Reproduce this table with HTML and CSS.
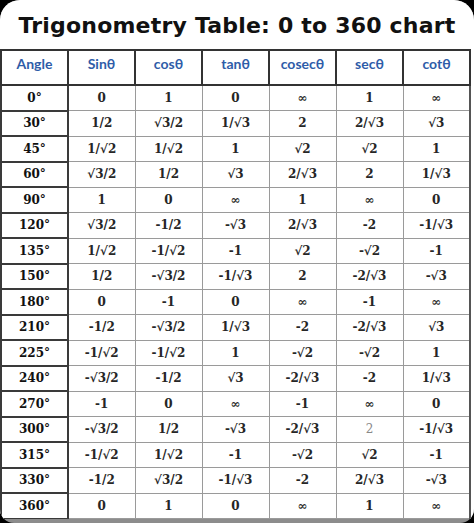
FILE: index.html
```html
<!DOCTYPE html>
<html>
<head>
<meta charset="utf-8">
<link rel="stylesheet" href="styles.css">
</head>
<body>
<div class="frame">
  <div class="card">
    <h1 class="title">Trigonometry Table: 0 to 360 chart</h1>
    <table class="trig">
      <colgroup>
        <col class="c"><col class="c"><col class="c"><col class="c"><col class="c"><col class="c"><col class="c">
      </colgroup>
      <thead>
        <tr><th>Angle</th><th>Sinθ</th><th>cosθ</th><th>tanθ</th><th>cosecθ</th><th>secθ</th><th>cotθ</th></tr>
      </thead>
      <tbody>
        <tr><td class="ang">0°</td><td>0</td><td>1</td><td>0</td><td>∞</td><td>1</td><td>∞</td></tr>
        <tr><td class="ang">30°</td><td>1/2</td><td>√3/2</td><td>1/√3</td><td>2</td><td>2/√3</td><td>√3</td></tr>
        <tr><td class="ang">45°</td><td>1/√2</td><td>1/√2</td><td>1</td><td>√2</td><td>√2</td><td>1</td></tr>
        <tr><td class="ang">60°</td><td>√3/2</td><td>1/2</td><td>√3</td><td>2/√3</td><td>2</td><td>1/√3</td></tr>
        <tr><td class="ang">90°</td><td>1</td><td>0</td><td>∞</td><td>1</td><td>∞</td><td>0</td></tr>
        <tr><td class="ang">120°</td><td>√3/2</td><td>-1/2</td><td>-√3</td><td>2/√3</td><td>-2</td><td>-1/√3</td></tr>
        <tr><td class="ang">135°</td><td>1/√2</td><td>-1/√2</td><td>-1</td><td>√2</td><td>-√2</td><td>-1</td></tr>
        <tr><td class="ang">150°</td><td>1/2</td><td>-√3/2</td><td>-1/√3</td><td>2</td><td>-2/√3</td><td>-√3</td></tr>
        <tr><td class="ang">180°</td><td>0</td><td>-1</td><td>0</td><td>∞</td><td>-1</td><td>∞</td></tr>
        <tr><td class="ang">210°</td><td>-1/2</td><td>-√3/2</td><td>1/√3</td><td>-2</td><td>-2/√3</td><td>√3</td></tr>
        <tr><td class="ang">225°</td><td>-1/√2</td><td>-1/√2</td><td>1</td><td>-√2</td><td>-√2</td><td>1</td></tr>
        <tr><td class="ang">240°</td><td>-√3/2</td><td>-1/2</td><td>√3</td><td>-2/√3</td><td>-2</td><td>1/√3</td></tr>
        <tr><td class="ang">270°</td><td>-1</td><td>0</td><td>∞</td><td>-1</td><td>∞</td><td>0</td></tr>
        <tr><td class="ang">300°</td><td>-√3/2</td><td>1/2</td><td>-√3</td><td>-2/√3</td><td class="light">2</td><td>-1/√3</td></tr>
        <tr><td class="ang">315°</td><td>-1/√2</td><td>1/√2</td><td>-1</td><td>-√2</td><td>√2</td><td>-1</td></tr>
        <tr><td class="ang">330°</td><td>-1/2</td><td>√3/2</td><td>-1/√3</td><td>-2</td><td>2/√3</td><td>-√3</td></tr>
        <tr><td class="ang">360°</td><td>0</td><td>1</td><td>0</td><td>∞</td><td>1</td><td>∞</td></tr>
      </tbody>
    </table>
  </div>
</div>
</body>
</html>
```
FILE: styles.css
```css
html, body {
  margin: 0;
  padding: 0;
  background: #000;
}
.frame {
  width: 474px;
  height: 523px;
  background: #8c8c8c;
  border-radius: 20px 20px 14px 14px;
  overflow: hidden;
}
.card {
  background: #fff;
  height: 519px;
  overflow: hidden;
}
.title {
  margin: 0;
  height: 49px;
  line-height: 52px;
  text-align: center;
  font-family: "DejaVu Sans", sans-serif;
  font-weight: bold;
  font-size: 22px;
  color: #111;
  letter-spacing: 0.2px;
}
.trig {
  border-collapse: collapse;
  table-layout: fixed;
  width: 471px;
  margin-left: 0;
}
.c {
  width: 67px;
}
.trig th {
  height: 35px;
  padding: 4px 0 0 0;
  vertical-align: top;
  font-family: "Lato", sans-serif;
  font-weight: 700;
  font-size: 14px;
  color: #2e5ca8;
  border: 2px solid #333;
  box-sizing: border-box;
}
.trig td {
  height: 25.5px;
  padding: 0;
  text-align: center;
  vertical-align: middle;
  font-family: "DejaVu Serif", serif;
  font-weight: bold;
  font-size: 12px;
  color: #262626;
  border: 1px solid #9a9a9a;
  box-sizing: border-box;
}
.trig td.ang {
  border: 2px solid #3a3a3a;
  font-size: 12px;
  color: #111;
}
.trig td.light {
  color: #888;
  font-weight: normal;
}
.trig tr td:last-child {
  border-right: 2px solid #555;
}
```
